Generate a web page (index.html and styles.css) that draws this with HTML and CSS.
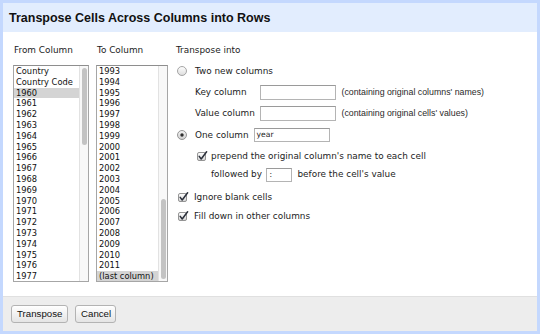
FILE: index.html
```html
<!DOCTYPE html>
<html>
<head>
<meta charset="utf-8">
<link rel="stylesheet" href="styles.css">
</head>
<body>
<div class="dialog">
  <div class="header">Transpose Cells Across Columns into Rows</div>
  <div class="content">
    <div class="col col-from">
      <div class="heading">From Column</div>
      <div class="listbox lb-from">
        <div class="items">
          <div class="item">Country</div>
          <div class="item">Country Code</div>
          <div class="item sel">1960</div>
          <div class="item">1961</div>
          <div class="item">1962</div>
          <div class="item">1963</div>
          <div class="item">1964</div>
          <div class="item">1965</div>
          <div class="item">1966</div>
          <div class="item">1967</div>
          <div class="item">1968</div>
          <div class="item">1969</div>
          <div class="item">1970</div>
          <div class="item">1971</div>
          <div class="item">1972</div>
          <div class="item">1973</div>
          <div class="item">1974</div>
          <div class="item">1975</div>
          <div class="item">1976</div>
          <div class="item">1977</div>
        </div>
        <div class="track"><div class="thumb thumb-from"></div></div>
      </div>
    </div>
    <div class="col col-to">
      <div class="heading">To Column</div>
      <div class="listbox lb-to">
        <div class="items">
          <div class="item">1993</div>
          <div class="item">1994</div>
          <div class="item">1995</div>
          <div class="item">1996</div>
          <div class="item">1997</div>
          <div class="item">1998</div>
          <div class="item">1999</div>
          <div class="item">2000</div>
          <div class="item">2001</div>
          <div class="item">2002</div>
          <div class="item">2003</div>
          <div class="item">2004</div>
          <div class="item">2005</div>
          <div class="item">2006</div>
          <div class="item">2007</div>
          <div class="item">2008</div>
          <div class="item">2009</div>
          <div class="item">2010</div>
          <div class="item">2011</div>
          <div class="item sel">(last column)</div>
        </div>
        <div class="track"><div class="thumb thumb-to"></div></div>
      </div>
    </div>
    <div class="col col-into">
      <div class="heading">Transpose into</div>
      <div class="row row-two">
        <svg class="radio" width="10" height="10" viewBox="0 0 10 10">
          <defs><linearGradient id="rg1" x1="0" y1="0" x2="0" y2="1"><stop offset="0" stop-color="#ffffff"/><stop offset="1" stop-color="#dcdcdc"/></linearGradient></defs>
          <circle cx="5" cy="5" r="4.5" fill="url(#rg1)" stroke="#9c9c9c" stroke-width="0.9"/>
        </svg>
        <span class="lbl">Two new columns</span>
      </div>
      <div class="row row-key">
        <span class="lbl field-lbl">Key column</span>
        <span class="input wide"></span>
        <span class="note">(containing original columns' names)</span>
      </div>
      <div class="row row-value">
        <span class="lbl field-lbl">Value column</span>
        <span class="input wide"></span>
        <span class="note">(containing original cells' values)</span>
      </div>
      <div class="row row-one">
        <svg class="radio" width="10" height="10" viewBox="0 0 10 10">
          <defs><linearGradient id="rg2" x1="0" y1="0" x2="0" y2="1"><stop offset="0" stop-color="#f4f4f4"/><stop offset="1" stop-color="#cfcfcf"/></linearGradient></defs>
          <circle cx="5" cy="5" r="4.5" fill="url(#rg2)" stroke="#8c8c8c" stroke-width="0.9"/>
          <circle cx="5" cy="5" r="1.7" fill="#2e2e2e"/>
        </svg>
        <span class="lbl">One column</span>
        <span class="input wide one-input">year</span>
      </div>
      <div class="row row-prepend">
        <svg class="check" width="11" height="10" viewBox="0 0 11 10">
          <defs><linearGradient id="cg1" x1="0" y1="0" x2="0" y2="1"><stop offset="0" stop-color="#ffffff"/><stop offset="1" stop-color="#d6d6d6"/></linearGradient></defs>
          <rect x="0.5" y="1.5" width="8" height="8" rx="1.5" fill="url(#cg1)" stroke="#8a8a8a" stroke-width="0.9"/>
          <path d="M2.2 5.4 L4.2 8 L9.6 0.8" fill="none" stroke="#2a2f3a" stroke-width="1.5" stroke-linecap="round" stroke-linejoin="round"/>
        </svg>
        <span class="lbl">prepend the original column's name to each cell</span>
      </div>
      <div class="row row-followed">
        <span class="lbl">followed by</span>
        <span class="input narrow">:</span>
        <span class="lbl">before the cell's value</span>
      </div>
      <div class="row row-ignore">
        <svg class="check" width="11" height="10" viewBox="0 0 11 10">
          <defs><linearGradient id="cg2" x1="0" y1="0" x2="0" y2="1"><stop offset="0" stop-color="#ffffff"/><stop offset="1" stop-color="#d6d6d6"/></linearGradient></defs>
          <rect x="0.5" y="1.5" width="8" height="8" rx="1.5" fill="url(#cg2)" stroke="#8a8a8a" stroke-width="0.9"/>
          <path d="M2.2 5.4 L4.2 8 L9.6 0.8" fill="none" stroke="#2a2f3a" stroke-width="1.5" stroke-linecap="round" stroke-linejoin="round"/>
        </svg>
        <span class="lbl">Ignore blank cells</span>
      </div>
      <div class="row row-fill">
        <svg class="check" width="11" height="10" viewBox="0 0 11 10">
          <defs><linearGradient id="cg3" x1="0" y1="0" x2="0" y2="1"><stop offset="0" stop-color="#ffffff"/><stop offset="1" stop-color="#d6d6d6"/></linearGradient></defs>
          <rect x="0.5" y="1.5" width="8" height="8" rx="1.5" fill="url(#cg3)" stroke="#8a8a8a" stroke-width="0.9"/>
          <path d="M2.2 5.4 L4.2 8 L9.6 0.8" fill="none" stroke="#2a2f3a" stroke-width="1.5" stroke-linecap="round" stroke-linejoin="round"/>
        </svg>
        <span class="lbl">Fill down in other columns</span>
      </div>
    </div>
  </div>
  <div class="footer">
    <button class="btn btn-transpose">Transpose</button>
    <button class="btn btn-cancel">Cancel</button>
  </div>
</div>
</body>
</html>
```

FILE: styles.css
```css
html, body {
  margin: 0;
  padding: 0;
  background: #ffffff;
}

.dialog {
  width: 540px;
  height: 334px;
  box-sizing: border-box;
  border: 3px solid #c4d8fe;
  display: flex;
  flex-direction: column;
  font-family: "DejaVu Sans", sans-serif;
  color: #1c1c1c;
}

.header {
  height: 29px;
  flex: none;
  box-sizing: border-box;
  background: #e2edfe;
  padding-left: 6px;
  display: flex;
  align-items: center;
  font-family: "Liberation Sans", Arial, sans-serif;
  font-weight: bold;
  font-size: 12.5px;
  color: #111111;
}

.content {
  height: 264px;
  flex: none;
  box-sizing: border-box;
  padding: 12px 0 0 10px;
  display: flex;
  background: #ffffff;
}

.col {
  display: flex;
  flex-direction: column;
}

.col-to {
  margin-left: 7px;
}

.col-into {
  margin-left: 8px;
}

.heading {
  font-size: 8.9px;
  line-height: 12px;
  height: 12px;
  padding-left: 1px;
}

.col-into .heading {
  padding-left: 0;
}

.listbox {
  margin-top: 9px;
  height: 217px;
  box-sizing: border-box;
  border: 1px solid #a6a6a6;
  border-top-color: #8e8e8e;
  display: flex;
  overflow: hidden;
  background: #ffffff;
}

.lb-from {
  width: 76px;
}

.lb-to {
  width: 72px;
}

.items {
  flex: 1;
  overflow: hidden;
  display: flex;
  flex-direction: column;
}

.item {
  flex: none;
  height: 10.8px;
  line-height: 10.8px;
  font-size: 8.3px;
  padding-left: 2px;
  white-space: nowrap;
  color: #111111;
}

.item.sel {
  background: #d4d4d4;
}

.track {
  width: 9px;
  flex: none;
  box-sizing: border-box;
  border-left: 1px solid #e2e2e2;
  background: #f8f8f8;
  display: flex;
  flex-direction: column;
}

.thumb {
  width: 4.5px;
  margin-left: 2px;
  border-radius: 3px;
  background: #c3c3c3;
}

.thumb-from {
  margin-top: 1.5px;
  height: 77px;
}

.thumb-to {
  margin-top: 133px;
  height: 80px;
}

.row {
  height: 16px;
  display: flex;
  align-items: center;
  font-size: 8.9px;
  white-space: nowrap;
}

.row-two { margin-top: 7px; }
.row-key { margin-top: 5px; padding-left: 19px; }
.row-value { margin-top: 5px; padding-left: 19px; }
.row-one { margin-top: 6px; }
.row-prepend { margin-top: 5px; padding-left: 21px; }
.row-followed { margin-top: 2px; padding-left: 35px; }
.row-ignore { margin-top: 7px; }
.row-fill { margin-top: 3px; }

.radio {
  flex: none;
  margin-left: 1px;
  margin-right: 8px;
}

.check {
  flex: none;
  margin-left: 1.5px;
  margin-right: 5.5px;
}

.row-prepend .check {
  margin-left: 0;
  margin-right: 3px;
}

.field-lbl {
  width: 65px;
  flex: none;
}

.input {
  flex: none;
  box-sizing: border-box;
  height: 15px;
  border: 1px solid #b4b4b4;
  border-top-color: #9a9a9a;
  background: #ffffff;
  font-size: 7.6px;
  line-height: 13px;
  padding-left: 2px;
  color: #222222;
}

.input.wide {
  width: 76px;
}

.one-input {
  margin-left: 5px;
  height: 14px;
  line-height: 12px;
}

.input.narrow {
  width: 26px;
  height: 14px;
  line-height: 12px;
  margin-left: 4.5px;
  margin-right: 5px;
  margin-top: 2px;
}

.note {
  margin-left: 5.5px;
  font-family: "Liberation Sans", Arial, sans-serif;
  font-size: 8.8px;
  color: #2a2a2a;
}

.footer {
  flex: 1;
  box-sizing: border-box;
  background: #ededed;
  border-top: 1px solid #e0e0e0;
  padding: 8px 0 0 8px;
  display: flex;
  align-items: flex-start;
  gap: 7px;
}

.btn {
  height: 18px;
  box-sizing: border-box;
  padding: 0 5px;
  margin: 0;
  border: 1px solid #b3b3b3;
  border-radius: 3px;
  background: linear-gradient(#ffffff, #e4e4e4);
  font-family: "Liberation Sans", Arial, sans-serif;
  font-size: 9.7px;
  color: #111111;
  line-height: 16px;
}

.btn-transpose {
  width: 57px;
}

.btn-cancel {
  width: 41px;
}
```
